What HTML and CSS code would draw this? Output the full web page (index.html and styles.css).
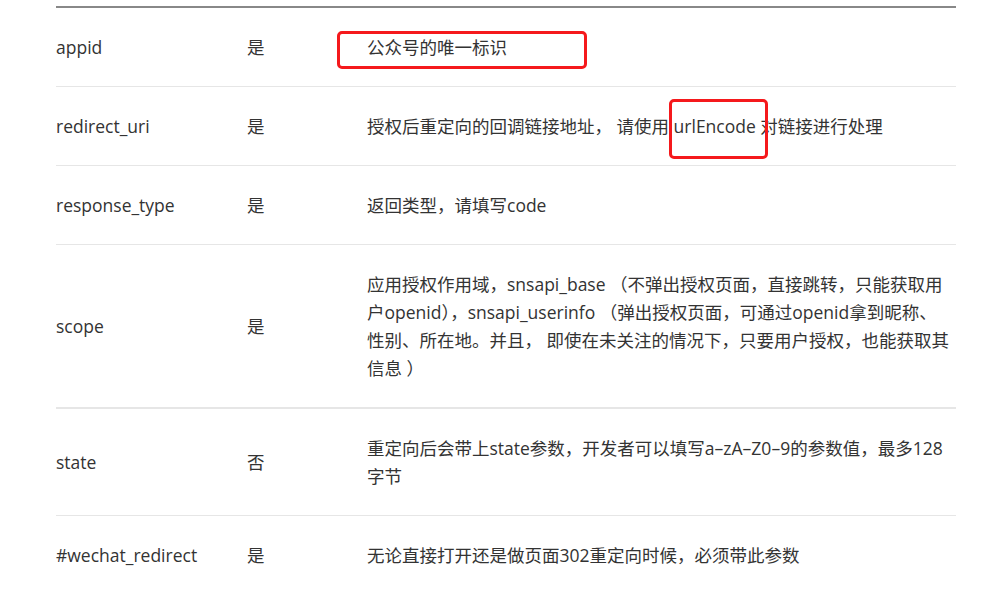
FILE: index.html
```html
<!DOCTYPE html>
<html lang="zh-CN">
<head>
    <meta charset="UTF-8">
    <title>网页授权参数说明</title>
    <link rel="stylesheet" href="styles.css">
</head>
<body>
    <div class="page">
        <table class="params">
            <tr>
                <td class="name">appid</td>
                <td class="req">是</td>
                <td class="desc">公众号的唯一标识</td>
            </tr>
            <tr>
                <td class="name">redirect_uri</td>
                <td class="req">是</td>
                <td class="desc">授权后重定向的回调链接地址， 请使用 urlEncode 对链接进行处理</td>
            </tr>
            <tr>
                <td class="name">response_type</td>
                <td class="req">是</td>
                <td class="desc">返回类型，请填写code</td>
            </tr>
            <tr class="thick">
                <td class="name">scope</td>
                <td class="req">是</td>
                <td class="desc">应用授权作用域，snsapi_base （不弹出授权页面，直接跳转，只能获取用户openid），snsapi_userinfo （弹出授权页面，可通过openid拿到昵称、性别、所在地。并且， 即使在未关注的情况下，只要用户授权，也能获取其信息 ）</td>
            </tr>
            <tr>
                <td class="name">state</td>
                <td class="req">否</td>
                <td class="desc">重定向后会带上state参数，开发者可以填写a–zA–Z0–9的参数值，最多128字节</td>
            </tr>
            <tr>
                <td class="name">#wechat_redirect</td>
                <td class="req">是</td>
                <td class="desc">无论直接打开还是做页面302重定向时候，必须带此参数</td>
            </tr>
        </table>

        <div class="mark mark-appid"></div>
        <div class="mark mark-encode"></div>
    </div>
</body>
</html>
```

FILE: styles.css
```css
body {
    margin: 0;
    background: #fff;
    font-family: "Open Sans", "Noto Sans CJK SC", sans-serif;
    font-size: 17.5px;
    color: #333;
}
.page {
    position: relative;
    padding: 6px 0 0 56px;
}
.params {
    width: 900px;
    border-collapse: collapse;
    border-top: 2px solid #888;
}
.params td {
    padding: 25px 0;
    line-height: 28px;
    vertical-align: middle;
    border-bottom: 1px solid #e6e6e6;
}
.params tr.thick td {
    border-bottom-width: 2px;
}
.params td.name {
    width: 191px;
}
.params td.req {
    width: 120px;
}
.params td.desc {
    padding-right: 4px;
}
.mark {
    position: absolute;
    border: 3px solid #f5191c;
    border-radius: 5px;
}
.mark-appid {
    left: 337px;
    top: 31px;
    width: 244px;
    height: 32px;
}
.mark-encode {
    left: 669px;
    top: 99px;
    width: 93px;
    height: 54px;
}
```
